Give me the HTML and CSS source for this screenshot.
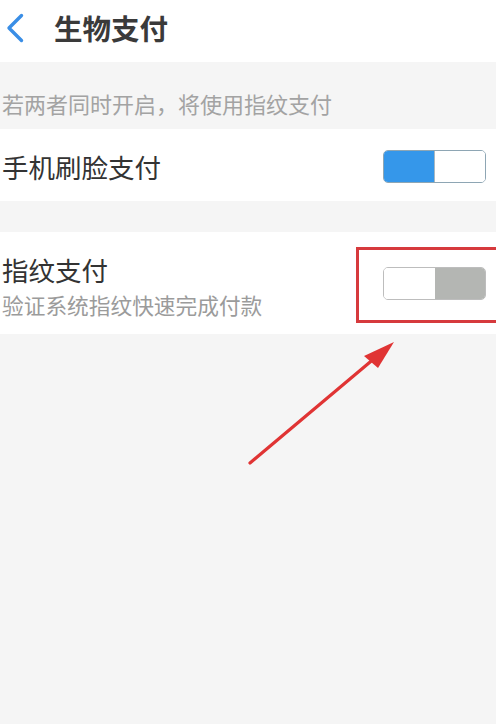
FILE: index.html
```html
<!DOCTYPE html>
<html lang="zh-CN">
<head>
<meta charset="utf-8">
<title>生物支付</title>
<link rel="stylesheet" href="styles.css">
</head>
<body>
<div class="page">
  <header class="topbar">
    <svg class="back" width="24" height="32" viewBox="0 0 24 32">
      <path d="M19.5 3.5 L7 16 L19.5 28.5" fill="none" stroke="#3a8ee6" stroke-width="3.4" stroke-linecap="round" stroke-linejoin="round"/>
    </svg>
    <h1 class="title">生物支付</h1>
  </header>
  <div class="hint">若两者同时开启，将使用指纹支付</div>
  <div class="row row-face">
    <span class="row-label">手机刷脸支付</span>
    <span class="switch switch-on"><span class="sw-a"></span><span class="sw-b"></span></span>
  </div>
  <div class="spacer"></div>
  <div class="row row-finger">
    <div class="row-text">
      <span class="row-label">指纹支付</span>
      <span class="row-sub">验证系统指纹快速完成付款</span>
    </div>
    <span class="switch switch-off"><span class="sw-a"></span><span class="sw-b"></span></span>
  </div>
  <div class="mark-box"></div>
  <svg class="mark-arrow" width="496" height="724" viewBox="0 0 496 724">
    <line x1="250" y1="463" x2="382" y2="352" stroke="#e03434" stroke-width="3.2" stroke-linecap="round"/>
    <polygon points="394,342 364,356 378,368" fill="#e03434"/>
  </svg>
</div>
</body>
</html>
```

FILE: styles.css
```css
* { box-sizing: border-box; }
html, body {
  margin: 0;
  padding: 0;
  background: #f5f5f5;
}
body {
  font-family: "Noto Sans CJK SC", "Noto Sans", sans-serif;
  width: 496px;
  height: 724px;
  overflow: hidden;
}
.page {
  position: relative;
  width: 496px;
  height: 724px;
}
.topbar {
  height: 62px;
  background: #ffffff;
  display: flex;
  align-items: center;
  padding-left: 2px;
  padding-bottom: 6px;
}
.back { display: block; }
.title {
  margin: 0 0 0 28px;
  font-size: 28.5px;
  font-weight: 700;
  color: #3a3a3a;
  line-height: 1;
}
.hint {
  height: 67px;
  padding: 29px 0 0 2px;
  font-size: 22px;
  line-height: 24px;
  color: #a3a3a3;
}
.row {
  background: #ffffff;
  display: flex;
  align-items: center;
  justify-content: space-between;
  padding: 0 10px 0 2px;
}
.row-face {
  height: 72px;
  padding-top: 3px;
}
.row-label {
  font-size: 26.5px;
  line-height: 30px;
  color: #333333;
}
.spacer { height: 31px; }
.row-finger {
  height: 102px;
}
.row-text {
  display: flex;
  flex-direction: column;
  padding-top: 9px;
}
.row-text .row-label { line-height: 35px; }
.row-sub {
  font-size: 21.7px;
  line-height: 36px;
  color: #9b9b9b;
}
.switch {
  display: flex;
  width: 103px;
  height: 33px;
  border: 1.5px solid #9fa7aa;
  border-radius: 5px;
  overflow: hidden;
}
.switch .sw-a, .switch .sw-b { flex: 1; }
.switch-on { border-color: #8ea6b4; }
.switch-on .sw-a { background: #3597ea; }
.switch-on .sw-b { background: #ffffff; border-left: 1px solid #a8b8c2; }
.switch-off { border-color: #bdbdbd; }
.switch-off .sw-a { background: #ffffff; }
.switch-off .sw-b { background: #b4b6b3; }
.mark-box {
  position: absolute;
  left: 356px;
  top: 247px;
  width: 146px;
  height: 76px;
  border: 3px solid #d63a3d;
}
.mark-arrow {
  position: absolute;
  left: 0;
  top: 0;
  pointer-events: none;
}
```
